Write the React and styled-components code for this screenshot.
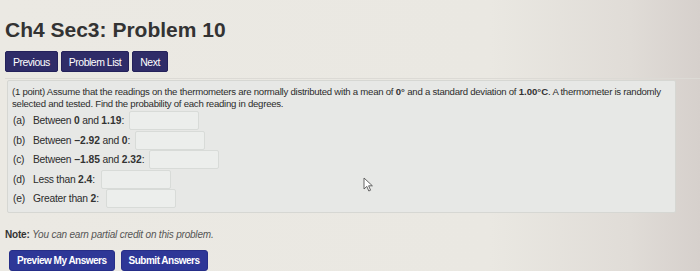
import React from "react";
import styled, { createGlobalStyle } from "styled-components";

const Global = createGlobalStyle`
  html, body { margin: 0; padding: 0; }
  body {
    width: 700px; height: 271px; overflow: hidden;
    background: linear-gradient(90deg, #ebe9e3 0%, #eae8e2 70%, #e0dcd7 90%, #d6d0cc 100%);
    font-family: "Liberation Sans", Arial, sans-serif;
    color: #333;
  }
`;

const Page = styled.div`
  position: relative;
  padding: 17px 0 0 5px;
  height: 271px;
  box-sizing: border-box;
`;

const Title = styled.h1`
  margin: 0;
  font-size: 21px;
  font-weight: bold;
  color: #333;
  line-height: 25px;
`;

const NavBar = styled.div`
  display: flex;
  gap: 3px;
  margin-top: 9px;
  padding-bottom: 6px;
  border-bottom: 1px solid #dcdad5;
`;

const NavButton = styled.button`
  background: #2f2c68;
  color: #fff;
  border: 1px solid #24215a;
  border-radius: 2px;
  font-family: "Liberation Sans", Arial, sans-serif;
  font-size: 10.5px;
  letter-spacing: -0.5px;
  height: 21px;
  padding: 0 ${p => p.$pad || 6}px;
`;

const ProblemBox = styled.div`
  margin: 1px 24px 0 2px;
  background: #e7e8e6;
  border: 1px solid #d6d7d3;
  border-radius: 2px;
  padding: 5px 5px 3px 4px;
  font-size: 9.6px;
  letter-spacing: -0.25px;
  color: #2c2c2c;
`;

const Intro = styled.p`
  margin: 0;
  line-height: 12px;
`;

const Part = styled.div`
  display: flex;
  align-items: center;
  height: 19.5px;
  padding-left: 1px;
  font-size: 10.3px;
  margin-top: ${p => p.$first ? 1 : 0}px;
`;

const Letter = styled.span`
  width: 20px;
`;

const Math = styled.b`
  font-weight: bold;
  letter-spacing: 0;
  color: #333;
`;

const Answer = styled.span`
  display: inline-block;
  margin-left: ${p => p.$gap || 8}px;
  width: 68px;
  height: 17px;
  background: #eceeec;
  border: 1px solid #d8dbd8;
  border-radius: 2px;
`;

const Note = styled.p`
  margin: 16px 0 0 0;
  font-size: 10px;
  letter-spacing: -0.2px;
  color: #333;
  em { color: #555; }
`;

const SubmitBar = styled.div`
  display: flex;
  gap: 6px;
  margin: 10px 0 0 4px;
`;

const SubmitButton = styled.button`
  background: #2e3797;
  color: #fff;
  border: 1px solid #262e88;
  border-radius: 3px;
  font-family: "Liberation Sans", Arial, sans-serif;
  font-size: 10px;
  font-weight: bold;
  letter-spacing: -0.5px;
  height: 21px;
  padding: 0 ${p => p.$pad || 7}px;
`;

const Cursor = styled.svg`
  position: absolute;
  left: 363px;
  top: 177px;
`;

const parts = [
  { l: "(a)", t: <>Between <Math>0</Math> and <Math>1.19</Math>:</>, gap: 5 },
  { l: "(b)", t: <>Between <Math>−2.92</Math> and <Math>0</Math>:</>, gap: 5 },
  { l: "(c)", t: <>Between <Math>−1.85</Math> and <Math>2.32</Math>:</>, gap: 5 },
  { l: "(d)", t: <>Less than <Math>2.4</Math>:</>, gap: 6 },
  { l: "(e)", t: <>Greater than <Math>2</Math>:</>, gap: 7 },
];

export default function App() {
  return (
    <>
      <Global />
      <Page>
        <Title>Ch4 Sec3: Problem 10</Title>
        <NavBar>
          <NavButton $pad={7}>Previous</NavButton>
          <NavButton $pad={7}>Problem List</NavButton>
          <NavButton $pad={7}>Next</NavButton>
        </NavBar>
        <ProblemBox>
          <Intro>
            (1 point) Assume that the readings on the thermometers are normally distributed with a mean of <Math>0°</Math> and a standard deviation of <Math>1.00°C</Math>. A thermometer is randomly selected and tested. Find the probability of each reading in degrees.
          </Intro>
          {parts.map((p, i) => (
            <Part key={p.l} $first={i === 0}>
              <Letter>{p.l}</Letter>
              <span>{p.t}</span>
              <Answer $gap={p.gap} />
            </Part>
          ))}
        </ProblemBox>
        <Note><b>Note:</b> <em>You can earn partial credit on this problem.</em></Note>
        <SubmitBar>
          <SubmitButton $pad={7}>Preview My Answers</SubmitButton>
          <SubmitButton $pad={7}>Submit Answers</SubmitButton>
        </SubmitBar>
        <Cursor width="11" height="15" viewBox="0 0 11 15">
          <path d="M1 1 L1 12 L3.8 9.4 L5.8 14 L7.6 13.2 L5.6 8.8 L9.4 8.8 Z" fill="#fff" stroke="#555" strokeWidth="0.9" strokeLinejoin="round" />
        </Cursor>
      </Page>
    </>
  );
}
